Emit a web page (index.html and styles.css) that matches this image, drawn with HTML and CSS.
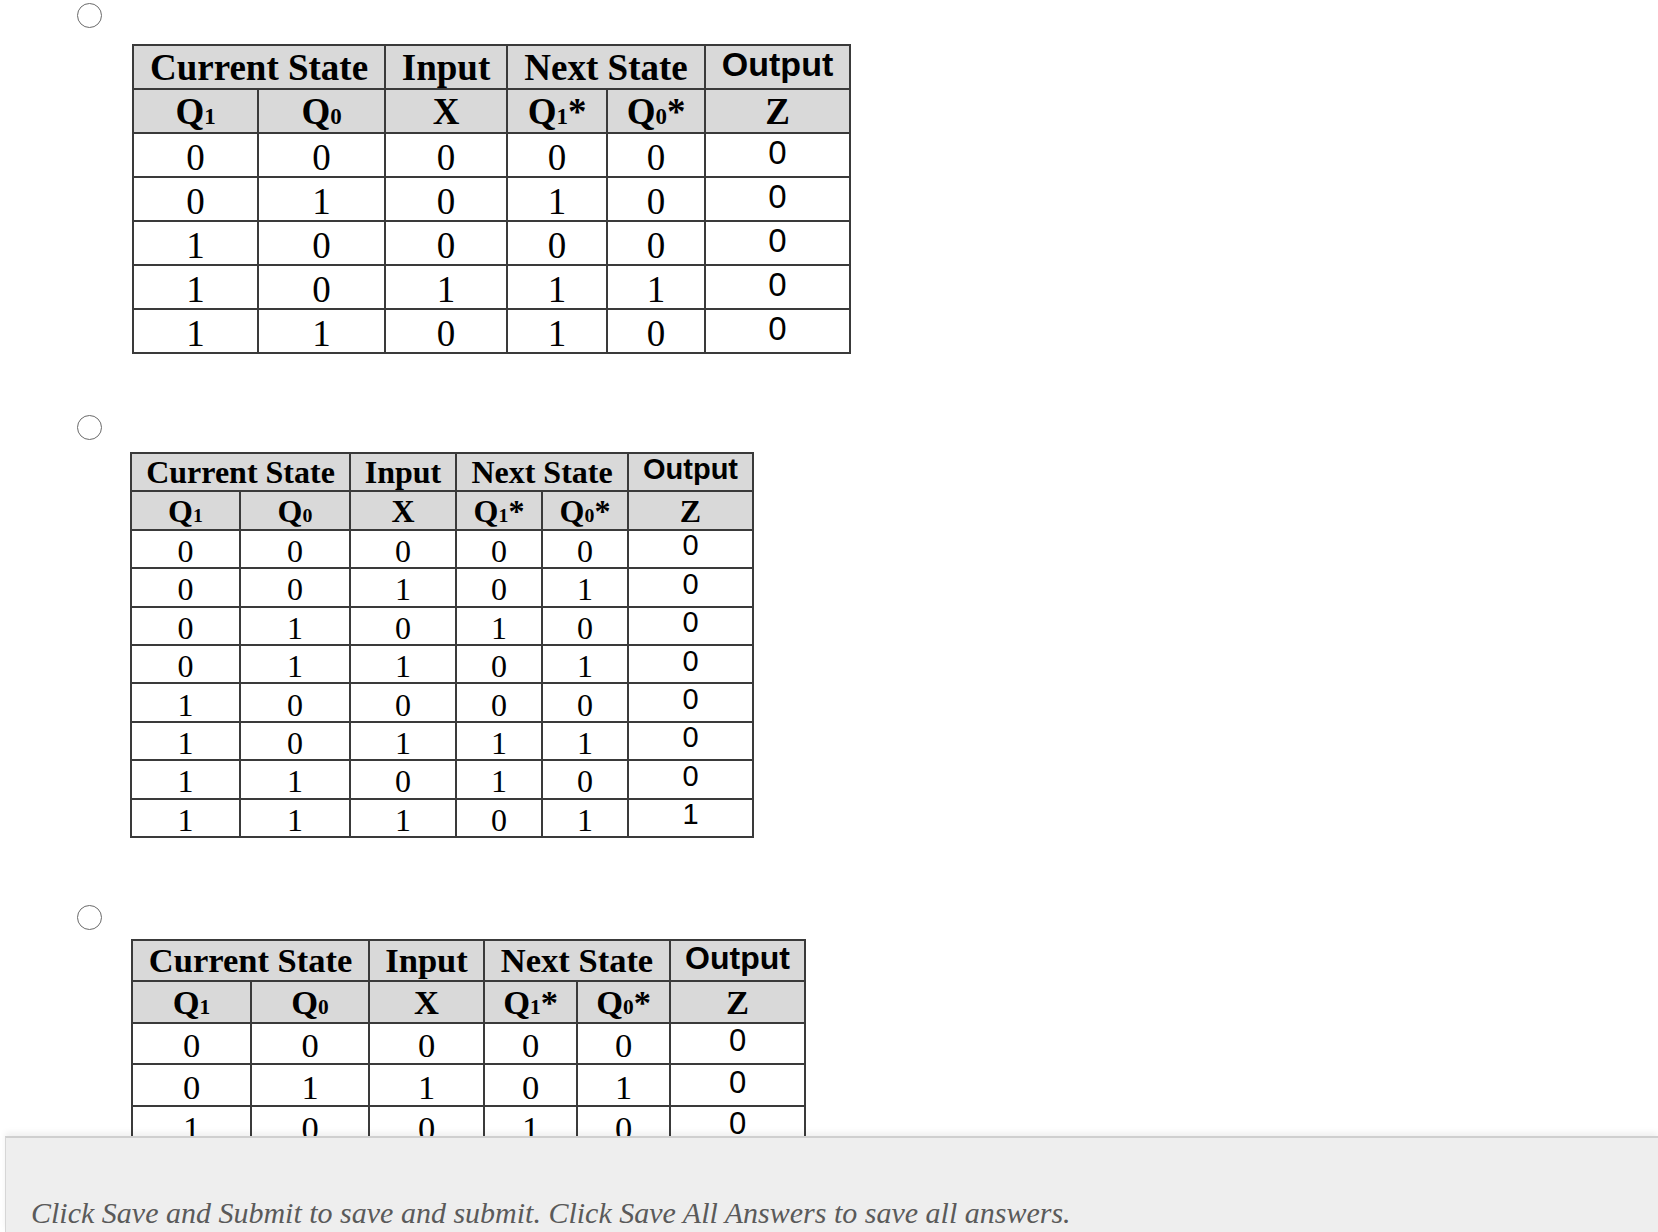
FILE: index.html
```html
<!DOCTYPE html>
<html>
<head>
<meta charset="utf-8">
<link rel="stylesheet" href="styles.css">
</head>
<body>
<div class="page">
  <main class="content">
    <div class="option opt1">
      <span class="radio"></span>
      <table class="st t1">
        <colgroup><col><col><col><col><col><col></colgroup>
        <tr class="h"><th colspan="2">Current State</th><th>Input</th><th colspan="2">Next State</th><th class="sans">Output</th></tr>
        <tr class="h"><th>Q<sub>1</sub></th><th>Q<sub>0</sub></th><th>X</th><th>Q<sub>1</sub>*</th><th>Q<sub>0</sub>*</th><th>Z</th></tr>
        <tr><td>0</td><td>0</td><td>0</td><td>0</td><td>0</td><td class="z">0</td></tr>
        <tr><td>0</td><td>1</td><td>0</td><td>1</td><td>0</td><td class="z">0</td></tr>
        <tr><td>1</td><td>0</td><td>0</td><td>0</td><td>0</td><td class="z">0</td></tr>
        <tr><td>1</td><td>0</td><td>1</td><td>1</td><td>1</td><td class="z">0</td></tr>
        <tr><td>1</td><td>1</td><td>0</td><td>1</td><td>0</td><td class="z">0</td></tr>
      </table>
    </div>
    <div class="option opt2">
      <span class="radio"></span>
      <table class="st t2">
        <colgroup><col><col><col><col><col><col></colgroup>
        <tr class="h"><th colspan="2">Current State</th><th>Input</th><th colspan="2">Next State</th><th class="sans">Output</th></tr>
        <tr class="h"><th>Q<sub>1</sub></th><th>Q<sub>0</sub></th><th>X</th><th>Q<sub>1</sub>*</th><th>Q<sub>0</sub>*</th><th>Z</th></tr>
        <tr><td>0</td><td>0</td><td>0</td><td>0</td><td>0</td><td class="z">0</td></tr>
        <tr><td>0</td><td>0</td><td>1</td><td>0</td><td>1</td><td class="z">0</td></tr>
        <tr><td>0</td><td>1</td><td>0</td><td>1</td><td>0</td><td class="z">0</td></tr>
        <tr><td>0</td><td>1</td><td>1</td><td>0</td><td>1</td><td class="z">0</td></tr>
        <tr><td>1</td><td>0</td><td>0</td><td>0</td><td>0</td><td class="z">0</td></tr>
        <tr><td>1</td><td>0</td><td>1</td><td>1</td><td>1</td><td class="z">0</td></tr>
        <tr><td>1</td><td>1</td><td>0</td><td>1</td><td>0</td><td class="z">0</td></tr>
        <tr><td>1</td><td>1</td><td>1</td><td>0</td><td>1</td><td class="z">1</td></tr>
      </table>
    </div>
    <div class="option opt3">
      <span class="radio"></span>
      <table class="st t3">
        <colgroup><col><col><col><col><col><col></colgroup>
        <tr class="h"><th colspan="2">Current State</th><th>Input</th><th colspan="2">Next State</th><th class="sans">Output</th></tr>
        <tr class="h"><th>Q<sub>1</sub></th><th>Q<sub>0</sub></th><th>X</th><th>Q<sub>1</sub>*</th><th>Q<sub>0</sub>*</th><th>Z</th></tr>
        <tr><td>0</td><td>0</td><td>0</td><td>0</td><td>0</td><td class="z">0</td></tr>
        <tr><td>0</td><td>1</td><td>1</td><td>0</td><td>1</td><td class="z">0</td></tr>
        <tr><td>1</td><td>0</td><td>0</td><td>1</td><td>0</td><td class="z">0</td></tr>
        <tr><td>1</td><td>1</td><td>0</td><td>1</td><td>0</td><td class="z">0</td></tr>
        <tr><td>1</td><td>1</td><td>1</td><td>0</td><td>1</td><td class="z">1</td></tr>
      </table>
    </div>
  </main>
  <footer class="footer">
    <p class="note">Click Save and Submit to save and submit. Click Save All Answers to save all answers.</p>
  </footer>
</div>
</body>
</html>
```

FILE: styles.css
```css
html, body {
  margin: 0;
  padding: 0;
  height: 100%;
  overflow: hidden;
  background: #ffffff;
}

.page {
  display: flex;
  flex-direction: column;
  height: 100vh;
}

.content {
  flex: 1;
  overflow: hidden;
  padding-top: 3px;
}

.option {
  display: flex;
  flex-direction: column;
  align-items: flex-start;
  padding-left: 77px;
}

.radio {
  display: block;
  width: 25px;
  height: 25px;
  box-sizing: border-box;
  border: 1.5px solid #6a6a6a;
  border-radius: 50%;
  background: #fff;
}

.st {
  border-collapse: collapse;
  table-layout: fixed;
  font-family: "Liberation Serif", "Times New Roman", serif;
  color: #000;
  font-size: var(--fs);
}

.st th, .st td {
  border: 2px solid #3a3a3a;
  padding: 0;
  text-align: center;
  vertical-align: middle;
  line-height: 1;
  overflow: hidden;
  white-space: nowrap;
}

.st tr {
  height: var(--rh);
}

.st .h th {
  background: #d9d9d9;
  font-weight: bold;
}

.st th.sans {
  font-family: "Liberation Sans", Arial, sans-serif;
  font-size: var(--fo);
  padding-bottom: 6px;
}

.st sub {
  font-size: 0.62em;
  vertical-align: baseline;
  font-weight: bold;
}

.st td {
  padding-top: 4px;
}

.st td.z {
  font-family: "Liberation Sans", Arial, sans-serif;
  font-size: var(--fz);
  padding-top: 0;
  padding-bottom: 6px;
}

/* table 1 */
.opt1 .st {
  margin: 16px 0 0 55px;
}
.t1 { --fs: 37px; --fo: 34px; --fz: 33px; --rh: 44px; width: 717px; }
.t1 col:nth-child(1) { width: 125px; }
.t1 col:nth-child(2) { width: 127px; }
.t1 col:nth-child(3) { width: 122px; }
.t1 col:nth-child(4) { width: 100px; }
.t1 col:nth-child(5) { width: 98px; }
.t1 col:nth-child(6) { width: 145px; }

/* table 2 */
.opt2 { margin-top: 61px; }
.opt2 .st {
  margin: 12px 0 0 53px;
}
.t2 { --fs: 32px; --fo: 29px; --fz: 29px; --rh: 38.4px; width: 622px; }
.t2 col:nth-child(1) { width: 109px; }
.t2 col:nth-child(2) { width: 110px; }
.t2 col:nth-child(3) { width: 106px; }
.t2 col:nth-child(4) { width: 86px; }
.t2 col:nth-child(5) { width: 86px; }
.t2 col:nth-child(6) { width: 125px; }

/* table 3 */
.opt3 { margin-top: 67px; }
.opt3 .st {
  margin: 9px 0 0 54px;
}
.t3 { --fs: 34.5px; --fo: 32px; --fz: 31px; --rh: 41.5px; width: 673px; }
.t3 col:nth-child(1) { width: 119px; }
.t3 col:nth-child(2) { width: 118px; }
.t3 col:nth-child(3) { width: 115px; }
.t3 col:nth-child(4) { width: 93px; }
.t3 col:nth-child(5) { width: 93px; }
.t3 col:nth-child(6) { width: 135px; }

/* footer */
.footer {
  flex: 0 0 96px;
  height: 96px;
  box-sizing: border-box;
  margin-left: 5px;
  background: #eeeeee;
  border-top: 2px solid #cfcfcf;
  border-left: 1px solid #d6d6d6;
  box-shadow: 0 -4px 6px rgba(0, 0, 0, 0.06);
  display: flex;
  align-items: flex-end;
  padding: 0 0 1px 25px;
}

.note {
  margin: 0;
  font-family: "Liberation Serif", "Times New Roman", serif;
  font-style: italic;
  font-size: 30px;
  line-height: 36px;
  color: #5a5a5a;
}
```
